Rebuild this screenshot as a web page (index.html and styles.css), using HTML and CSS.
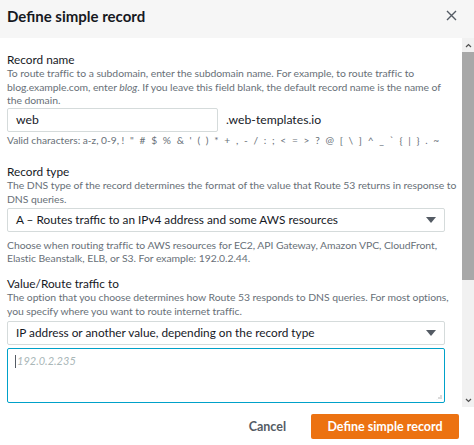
FILE: index.html
```html
<!DOCTYPE html>
<html lang="en">
  <head>
    <meta charset="UTF-8" />
    <title>Define simple record</title>
    <link rel="stylesheet" href="styles.css">
  </head>
  <body>
    <div class="modal">
      <div class="modal-header">
        <h2>Define simple record</h2>
        <span class="close">
          <svg width="11" height="11" viewBox="0 0 11 11"><path d="M1 1 L10 10 M10 1 L1 10" stroke="#545b64" stroke-width="1.4" fill="none"/></svg>
        </span>
      </div>

      <div class="modal-body">
        <div class="content">
          <div class="label">Record name</div>
          <div class="desc">To route traffic to a subdomain, enter the subdomain name. For example, to route traffic to<br>blog.example.com, enter <em>blog</em>. If you leave this field blank, the default record name is the name of<br>the domain.</div>
          <div class="name-row">
            <div class="input">web</div>
            <span class="suffix">.web-templates.io</span>
          </div>
          <div class="hint">Valid characters: a-z, 0-9, <span class="symbols">! " # $ % &amp; ' ( ) * + , - / : ; &lt; = &gt; ? @ [ \ ] ^ _ ` { | } . ~</span></div>

          <div class="label type-label">Record type</div>
          <div class="desc">The DNS type of the record determines the format of the value that Route 53 returns in response to<br>DNS queries.</div>
          <div class="select">
            <span>A – Routes traffic to an IPv4 address and some AWS resources</span>
            <span class="caret"></span>
          </div>
          <div class="desc help">Choose when routing traffic to AWS resources for EC2, API Gateway, Amazon VPC, CloudFront,<br>Elastic Beanstalk, ELB, or S3. For example: 192.0.2.44.</div>

          <div class="label value-label">Value/Route traffic to</div>
          <div class="desc">The option that you choose determines how Route 53 responds to DNS queries. For most options,<br>you specify where you want to route internet traffic.</div>
          <div class="select value-select">
            <span>IP address or another value, depending on the record type</span>
            <span class="caret"></span>
          </div>
          <div class="textarea">
            <span class="cursor"></span><span>192.0.2.235</span>
            <svg class="grip" width="6" height="6" viewBox="0 0 6 6"><path d="M5 1 V5 M3 3 V5 M1 5 V5.2" stroke="#b5b5b5" stroke-width="1" fill="none"/></svg>
          </div>
        </div>

        <div class="scrollbar">
          <div class="arrow">
            <svg width="7" height="5" viewBox="0 0 7 5"><path d="M1 4 L3.5 1.5 L6 4" stroke="#505050" stroke-width="1.2" fill="none"/></svg>
          </div>
          <div class="thumb"></div>
          <div class="track"></div>
          <div class="arrow">
            <svg width="7" height="5" viewBox="0 0 7 5"><path d="M1 1 L3.5 3.5 L6 1" stroke="#505050" stroke-width="1.2" fill="none"/></svg>
          </div>
        </div>
      </div>

      <div class="modal-footer">
        <button class="btn-link">Cancel</button>
        <button class="btn-primary">Define simple record</button>
      </div>
    </div>
  </body>
</html>
```

FILE: styles.css
```css
* {
  margin: 0;
  padding: 0;
  box-sizing: border-box;
}

body {
  font-family: Lato, 'Open Sans', sans-serif;
  background: #ffffff;
  color: #16191f;
  width: 474px;
  height: 445px;
  overflow: hidden;
}

.modal {
  display: flex;
  flex-direction: column;
  height: 445px;
}

.modal-header {
  background: #f6f6f6;
  height: 38px;
  display: flex;
  align-items: center;
  justify-content: space-between;
  padding: 0 17px 0 7px;
}

.modal-header h2 {
  font-size: 15px;
  font-weight: 700;
  color: #16191f;
  margin-top: -6px;
}

.close {
  display: flex;
  margin-top: -8px;
}

.modal-body {
  display: flex;
  height: 369px;
}

.content {
  flex: 1;
  min-width: 0;
  padding: 14px 17px 0 7px;
  overflow: hidden;
}

.label {
  font-size: 11.8px;
  line-height: 15px;
  color: #16191f;
}

.type-label {
  margin-top: 17px;
}

.value-label {
  margin-top: 10.5px;
}

.desc {
  font-size: 10.4px;
  line-height: 13.5px;
  letter-spacing: -0.05px;
  color: #687078;
  white-space: nowrap;
}

.name-row {
  display: flex;
  align-items: center;
}

.input {
  width: 211px;
  height: 24px;
  border: 1px solid #d5dbdb;
  border-radius: 2px;
  padding: 0 8px;
  font-size: 12.2px;
  line-height: 22px;
}

.suffix {
  margin-left: 8px;
  font-size: 12.2px;
}

.hint {
  font-size: 10.2px;
  line-height: 13px;
  color: #687078;
  margin-top: 2.5px;
  white-space: nowrap;
}

.symbols {
  word-spacing: 3.1px;
}

.select {
  display: flex;
  align-items: center;
  justify-content: space-between;
  height: 24px;
  margin-top: 1.5px;
  border: 1px solid #d5dbdb;
  border-radius: 2px;
  padding: 0 8px 0 8px;
  font-size: 11.8px;
}

.value-select {
  margin-top: 2.5px;
}

.caret {
  width: 0;
  height: 0;
  border-left: 5px solid transparent;
  border-right: 5px solid transparent;
  border-top: 6px solid #545b64;
}

.help {
  margin-top: 7px;
}

.textarea {
  position: relative;
  height: 55px;
  margin-top: 3px;
  border: 1px solid #00a1c9;
  border-radius: 2px;
  padding: 5px 8px 0 7px;
  font-size: 11px;
  line-height: 14px;
  font-style: italic;
  color: #aab7b8;
  display: flex;
  align-items: flex-start;
}

.cursor {
  width: 1px;
  height: 13px;
  margin-top: 1px;
  margin-right: 1px;
  background: #545b64;
}

.grip {
  position: absolute;
  right: 2px;
  bottom: 2px;
}

.scrollbar {
  width: 12px;
  display: flex;
  flex-direction: column;
  background: #f1f1f1;
}

.arrow {
  height: 14px;
  display: flex;
  align-items: center;
  justify-content: center;
}

.thumb {
  height: 228px;
  background: #a8a8a8;
}

.track {
  flex: 1;
}

.modal-footer {
  flex: 1;
  display: flex;
  align-items: center;
  justify-content: flex-end;
  gap: 25px;
  padding: 0 15px 0 0;
}

.btn-link {
  background: none;
  border: none;
  font-family: inherit;
  font-size: 12.5px;
  font-weight: 700;
  color: #545b64;
}

.btn-primary {
  background: #ec7211;
  border: none;
  border-radius: 2px;
  color: #ffffff;
  font-family: inherit;
  font-size: 12.5px;
  font-weight: 700;
  height: 25px;
  width: 148px;
}
```
